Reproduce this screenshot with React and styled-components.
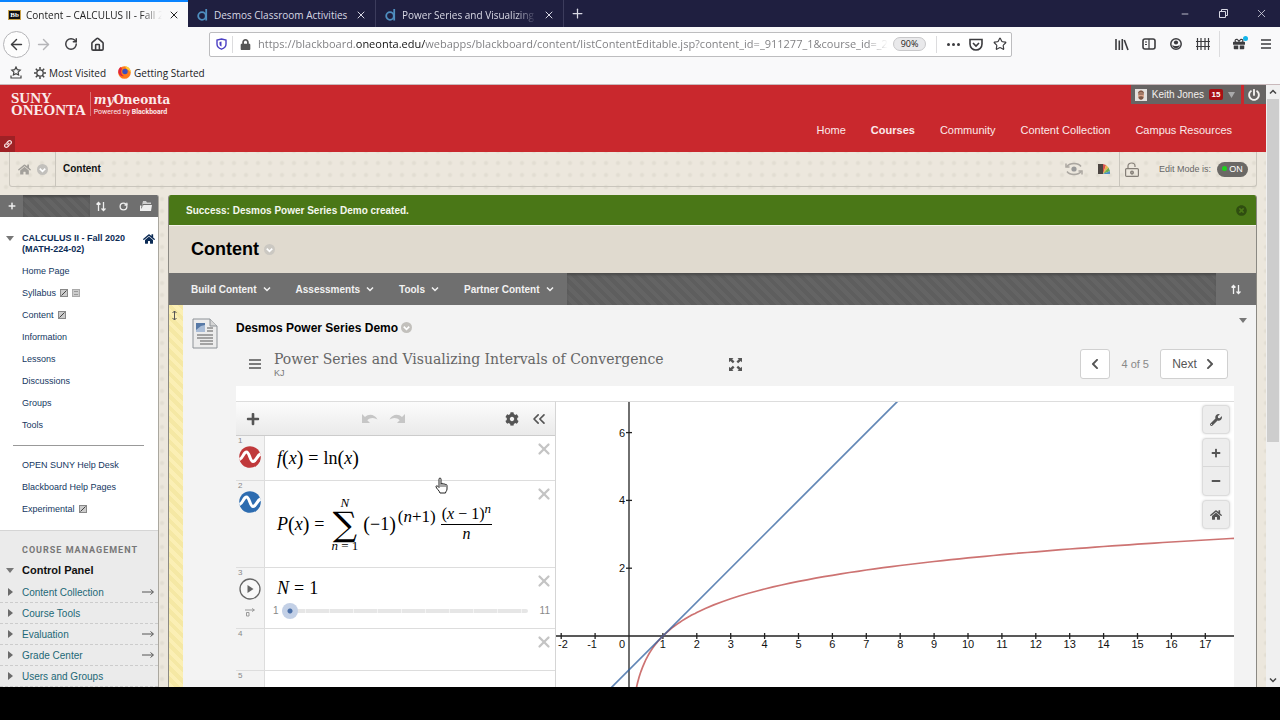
import React, { useState } from "react";
import styled, { createGlobalStyle, css } from "styled-components";
import {
  FaPlus,
  FaMinus,
  FaWrench,
  FaHome,
  FaCog,
  FaLock,
  FaChevronLeft,
  FaChevronRight,
  FaPowerOff,
  FaLink,
  FaGift,
  FaTimesCircle,
} from "react-icons/fa";
import { Home, RotateCw, ArrowLeft, ArrowRight, X, Minus, Plus, Star, ChevronsLeft } from "lucide-react";

const GlobalStyle = createGlobalStyle`
  * {
    box-sizing: border-box;
  }
  body {
    margin: 0;
    background: #000;
    font-family: "Liberation Sans", Arial, sans-serif;
    font-size: 10px;
    color: #111;
  }
  button {
    margin: 0;
    padding: 0;
    border: 0;
    background: none;
    color: inherit;
    font: inherit;
    cursor: pointer;
  }
  ul {
    margin: 0;
    padding: 0;
    list-style: none;
  }
  a {
    color: inherit;
    text-decoration: none;
  }
  svg {
    display: block;
    flex: none;
  }
`;

/* ---------- browser window ---------- */

const Screen = styled.div`
  display: flex;
  flex-direction: column;
  height: 100vh;
  padding-bottom: 33px;
  overflow: hidden;
  background: #000;
`;

const TabStrip = styled.div`
  display: flex;
  align-items: stretch;
  flex: none;
  height: 27px;
  background: #1f1f40;
  color: #d8d8e4;
  font-family: "Open Sans", "Noto Sans", sans-serif;
`;

const Tab = styled.div`
  display: flex;
  align-items: center;
  flex: 0 1 188px;
  gap: 5px;
  min-width: 0;
  padding: 2px 8px 0;
  border-right: 1px solid #3c3c5c;
  ${({ $active }) =>
    $active &&
    css`
      padding-top: 0;
      border-top: 2px solid #0a84ff;
      border-right: 0;
      background: #f9f9fa;
      color: #222;
    `}
`;

const TabTitle = styled.button`
  flex: 1;
  min-width: 0;
  overflow: hidden;
  font-size: 10px;
  line-height: 16px;
  text-align: left;
  white-space: nowrap;
  ${({ $fade }) => $fade && "mask-image: linear-gradient(90deg, #000 84%, transparent);"}
`;

const BbIcon = styled.span`
  flex: none;
  width: 13px;
  border: 1px solid #c9a24a;
  background: #111;
  color: #fff;
  font: bold 7px/8px "Liberation Serif", serif;
  text-align: center;
`;

const IconButton = styled.button`
  display: flex;
  align-items: center;
  justify-content: center;
  flex: none;
  width: ${({ $w }) => $w || 27}px;
`;

const WindowButtons = styled.div`
  display: flex;
  margin-left: auto;
`;

const NavBar = styled.div`
  display: flex;
  align-items: center;
  flex: none;
  height: 34px;
  background: #f9f9fa;
  color: #3c3c3f;
`;

const BackButton = styled(IconButton)`
  width: 27px;
  height: 27px;
  margin: 0 0 0 3px;
  border: 1px solid #b5b5b8;
  border-radius: 50%;
  background: #fdfdfd;
`;

const UrlBox = styled.div`
  display: flex;
  align-items: center;
  flex: 1;
  min-width: 0;
  height: 25px;
  margin: 0 96px 0 98px;
  padding-right: 3px;
  border: 1px solid #bdbdbf;
  border-radius: 2px;
  background: #fff;
`;

const UrlInput = styled.input`
  flex: 1;
  min-width: 0;
  margin: 0 5px 0 1px;
  padding: 0;
  border: 0;
  outline: 0;
  background: linear-gradient(
    90deg,
    #7b7b7e 0 97px,
    #111 97px 167px,
    #7b7b7e 167px calc(100% - 20px),
    transparent
  );
  background-clip: text;
  color: transparent;
  font-family: "Open Sans", "Noto Sans", sans-serif;
  font-size: 11px;
  line-height: 18px;
`;

const Zoom = styled.button`
  width: 33px;
  height: 14px;
  border: 1px solid #c8c8ca;
  border-radius: 7px;
  background: #e9e9eb;
  color: #222;
  font: 9px/12px "Open Sans", "Noto Sans", sans-serif;
`;

const Divider = styled.span`
  flex: none;
  width: 1px;
  height: ${({ $h }) => $h || 17}px;
  margin: 0 ${({ $m }) => $m || 0}px;
  background: #dcdcde;
`;

const NavTools = styled.div`
  display: flex;
  align-items: center;
  padding-right: 2px;
`;

const Bookmarks = styled.div`
  display: flex;
  align-items: center;
  flex: none;
  gap: 12px;
  height: 24px;
  padding: 0 10px;
  border-bottom: 1px solid #c9b9bb;
  background: #f9f9fa;
  color: #222;
  font-family: "Open Sans", "Noto Sans", sans-serif;
  font-size: 10px;
`;

const Bookmark = styled.a`
  display: flex;
  align-items: center;
  gap: 3px;
`;

const Viewport = styled.div`
  display: flex;
  flex: 1;
  min-height: 0;
`;

const Page = styled.div`
  display: flex;
  flex-direction: column;
  flex: 1;
  min-width: 0;
  overflow: hidden;
  background-color: #ece7dd;
  background-image: radial-gradient(circle, #e2ddd2 1px, transparent 3px);
  background-size: 12px 12px;
`;

const ScrollBar = styled.div`
  display: flex;
  flex-direction: column;
  align-items: center;
  flex: none;
  width: 14px;
  background: #f0f0f0;
  color: #444;
`;

const ScrollThumb = styled.div`
  flex: 0 0 57%;
  width: 12px;
  background: #cdcdcd;
`;

const ScrollArrow = styled(IconButton)`
  width: 14px;
  height: 14px;
  &:last-child {
    margin-top: auto;
  }
`;

/* ---------- blackboard header ---------- */

const Header = styled.header`
  display: flex;
  justify-content: space-between;
  flex: none;
  height: 67px;
  background: #c9282d;
  color: #fbeaea;
`;

const Brand = styled.div`
  display: flex;
  flex-direction: column;
  justify-content: space-between;
  padding-top: 7px;
`;

const Logo = styled.div`
  display: flex;
  gap: 3px;
  padding-left: 11px;
`;

const LogoName = styled.div`
  padding-right: 4px;
  border-right: 1px solid #dd6f72;
  font: bold 15px/12px "Liberation Serif", serif;
`;

const LogoPortal = styled.div`
  font: bold 12px/16px "DejaVu Serif", serif;
  small {
    display: block;
    font: 7px/8px Roboto, sans-serif;
  }
`;

const LinkBadge = styled.button`
  display: flex;
  align-items: center;
  justify-content: center;
  width: 15px;
  height: 16px;
  background: #9f2125;
`;

const HeaderRight = styled.div`
  display: flex;
  flex-direction: column;
  align-items: flex-end;
`;

const UserStrip = styled.div`
  display: flex;
  gap: 3px;
  height: 19px;
`;

const UserButton = styled.button`
  display: flex;
  align-items: center;
  gap: 5px;
  padding: 0 6px 0 4px;
  background: #676463;
  color: #f3f0ee;
  font-size: 10px;
`;

const Badge = styled.span`
  width: 14px;
  border-radius: 2px;
  background: #a80f14;
  color: #fff;
  font: bold 8px/11px "Liberation Sans", sans-serif;
  text-align: center;
`;

const TopNav = styled.nav`
  display: flex;
  gap: 25px;
  padding: 19px 34px 0 0;
  font-size: 11px;
  line-height: 14px;
`;

const TopLink = styled.a`
  font-weight: ${({ $current }) => ($current ? "bold" : "normal")};
`;

const Crumbs = styled.div`
  display: flex;
  align-items: stretch;
  flex: none;
  height: 35px;
  margin: 0 9px 8px;
  border: 1px solid #c9c5bc;
  border-top: 0;
  border-radius: 0 0 3px 3px;
  color: #666;
`;

const CrumbCell = styled.div`
  display: flex;
  align-items: center;
  justify-content: center;
  gap: 6px;
  width: ${({ $w }) => $w}px;
  border-right: ${({ $line }) => ($line ? "1px solid #c9c5bc" : 0)};
`;

const CrumbTitle = styled.div`
  flex: 1;
  padding-left: 7px;
  color: #111;
  font-size: 10px;
  font-weight: bold;
  line-height: 34px;
`;

const EditMode = styled.div`
  display: flex;
  align-items: center;
  gap: 6px;
  padding: 0 8px 0 14px;
  font-size: 9px;
`;

const EditToggle = styled.button`
  display: flex;
  align-items: center;
  justify-content: center;
  gap: 2px;
  width: 31px;
  height: 15px;
  border-radius: 8px;
  background: #6b6966;
  color: #fff;
  font-size: 9px;
  i {
    width: 5px;
    height: 5px;
    margin-bottom: 2px;
    border-radius: 50%;
    background: #1ed11e;
  }
`;

/* ---------- course menu ---------- */

const Columns = styled.div`
  display: flex;
  flex: 1;
  gap: 9px;
  min-height: 0;
  padding-right: 9px;
`;

const Side = styled.aside`
  display: flex;
  flex-direction: column;
  flex: none;
  width: 159px;
  border-right: 1px solid #aaa79f;
  border-radius: 0 2px 0 0;
  background: #fff;
  overflow: hidden;
`;

const stripes = css`
  background: repeating-linear-gradient(45deg, #5e5e5e 0 4px, #646464 4px 8px);
  box-shadow: inset 0 3px 3px -1px #4a4a4a;
`;

const SideTools = styled.div`
  display: flex;
  flex: none;
  height: 22px;
  background: #6f6f6f;
  color: #eee;
`;

const StripeFill = styled.div`
  flex: 1;
  ${stripes}
`;

const CourseTitle = styled.div`
  display: flex;
  padding: 16px 3px 5px 0;
  color: #0d2c56;
  font-size: 9px;
  font-weight: bold;
  line-height: 11px;
  a {
    flex: 1;
  }
`;

const Caret = styled.span`
  flex: none;
  width: 0;
  height: 0;
  margin: ${({ $top }) => ($top ? "3px 8px 0 6px" : "0 8px 0 6px")};
  border: solid transparent;
  border-width: 5px 4px 0;
  border-top-color: #777;
`;

const MenuItem = styled.li`
  display: flex;
  align-items: center;
  gap: 4px;
  height: 22px;
  padding-left: 22px;
  color: #14375f;
  font-size: 9px;
`;

const MenuRule = styled.hr`
  width: 131px;
  margin: 9px 0 8px 13px;
  border: 0;
  border-top: 1px solid #999;
`;

const Control = styled.section`
  flex: 1;
  margin-top: 10px;
  border-top: 1px solid #d5d5d5;
  background: #ebebeb;
`;

const ControlLabel = styled.div`
  padding: 11px 0 0 22px;
  color: #777;
  font: bold 9px/16px Roboto, sans-serif;
  letter-spacing: 1px;
  white-space: nowrap;
`;

const ControlTitle = styled.div`
  display: flex;
  align-items: center;
  height: 24px;
  color: #111;
  font-size: 11px;
  font-weight: bold;
`;

const ControlItem = styled.li`
  display: flex;
  align-items: center;
  height: 21px;
  padding: 0 4px 0 8px;
  border-bottom: 1px dashed #ccc;
  color: #1c6876;
  font-size: 10px;
  &::before {
    width: 0;
    height: 0;
    margin-right: 9px;
    border: solid transparent;
    border-width: 4px 0 4px 5px;
    border-left-color: #6b6b6b;
    content: "";
  }
  svg {
    margin-left: auto;
  }
`;

/* ---------- content ---------- */

const Main = styled.main`
  display: flex;
  flex-direction: column;
  flex: 1;
  min-width: 0;
  border-radius: 3px 3px 0 0;
  border-right: 1px solid #8b8983;
  border-left: 1px solid #8b8983;
  overflow: hidden;
`;

const Receipt = styled.div`
  display: flex;
  align-items: center;
  justify-content: space-between;
  flex: none;
  height: 30px;
  padding: 0 9px 0 17px;
  background: #4a7717;
  color: #f4f7ee;
  font-weight: bold;
  font-size: 10px;
  svg {
    color: #2f4d10;
  }
`;

const PageTitle = styled.div`
  display: flex;
  align-items: center;
  flex: none;
  gap: 5px;
  height: 48px;
  padding-left: 22px;
  border-top: 1px solid #f5f2ea;
  background: #e0dacf;
  h1 {
    margin: 0;
    color: #000;
    font-size: 18px;
  }
`;

const ActionBar = styled.div`
  display: flex;
  flex: none;
  height: 32px;
  background: #6f6f6f;
  color: #f2f2f2;
`;

const Actions = styled.ul`
  display: flex;
  padding-left: 10px;
`;

const Action = styled.button`
  display: flex;
  align-items: center;
  gap: 6px;
  height: 32px;
  padding: 0 13px 0 12px;
  font-size: 10px;
  font-weight: bold;
`;

const Item = styled.article`
  display: flex;
  flex: 1;
  min-height: 0;
  background: #f3f3f3;
`;

const DragStrip = styled.div`
  display: flex;
  justify-content: center;
  flex: none;
  width: 14px;
  padding: 5px 4px 0 0;
  background: repeating-linear-gradient(45deg, #fbefb4 0 4px, #f5e8a4 4px 8px);
`;

const ItemIcon = styled.div`
  flex: none;
  width: 53px;
  padding: 13px 0 0 9px;
`;

const ItemBody = styled.div`
  display: flex;
  flex-direction: column;
  flex: 1;
  min-width: 0;
  padding-right: 22px;
`;

const ItemTitle = styled.div`
  display: flex;
  align-items: center;
  flex: none;
  gap: 3px;
  height: 37px;
  margin-right: -13px;
  padding-top: 8px;
  h3 {
    margin: 0;
    color: #000;
    font-size: 12px;
  }
`;

const ItemToggle = styled(Caret)`
  margin: 0 0 14px auto;
`;

const ActivityHeader = styled.div`
  display: grid;
  grid-template-columns: 1fr auto 1fr;
  align-items: center;
  flex: none;
  height: 44px;
  color: #555;
`;

const ActivityName = styled.div`
  display: flex;
  align-items: center;
  gap: 13px;
  padding-left: 13px;
  white-space: nowrap;
  h2 {
    margin: 0;
    color: #666;
    font: 14px/18px "DejaVu Serif", serif;
  }
  p {
    margin: 0;
    color: #777;
    font-size: 9px;
    line-height: 10px;
  }
`;

const Pager = styled.div`
  display: flex;
  align-items: center;
  justify-content: flex-end;
  gap: 11px;
  padding-right: 6px;
  color: #888;
  font-size: 11px;
`;

const PagerButton = styled.button`
  display: flex;
  align-items: center;
  justify-content: center;
  gap: 7px;
  width: ${({ $w }) => $w}px;
  height: 30px;
  border: 1px solid #d0d0d0;
  border-radius: 3px;
  background: #fff;
  color: #555;
  font-size: 12px;
`;

const Calculator = styled.div`
  display: flex;
  flex: 1;
  min-height: 0;
  border-top: 15px solid #fff;
`;

const Expressions = styled.div`
  position: relative;
  display: flex;
  flex-direction: column;
  flex: none;
  width: 320px;
  border-top: 1px solid #ddd;
  border-right: 1px solid #d5d5d5;
  background: #fff;
`;

const ExprTools = styled.div`
  display: flex;
  align-items: center;
  flex: none;
  height: 34px;
  padding-right: 3px;
  border-bottom: 1px solid #ccc;
  background: linear-gradient(#fcfcfc, #eaeaea);
  color: #555;
  button:nth-child(2) {
    margin-left: auto;
  }
  button:nth-child(4) {
    margin-left: 88px;
  }
`;

const Row = styled.div`
  display: flex;
  flex: none;
  height: ${({ $h }) => $h}px;
  border-bottom: 1px solid #ddd;
`;

const Gutter = styled.div`
  display: flex;
  flex-direction: column;
  align-items: center;
  flex: none;
  width: 29px;
  border-right: 1px solid #ddd;
  background: #f3f3f3;
  color: #888;
  span {
    align-self: flex-start;
    padding-left: 2px;
    font-size: 8px;
    line-height: 10px;
  }
  svg + svg {
    margin-top: 8px;
  }
`;

const RowBody = styled.div`
  display: flex;
  flex-direction: column;
  justify-content: center;
  flex: 1;
  min-width: 0;
  padding-left: 12px;
`;

const Delete = styled(IconButton)`
  align-self: flex-start;
  width: 23px;
  height: 26px;
  color: #c4c4c4;
`;

const Formula = styled.div`
  display: flex;
  align-items: center;
  color: #000;
  font: 18px/20px "Liberation Serif", serif;
  white-space: pre;
`;

const Paren = styled.span`
  font-size: 20px;
`;

const Relation = styled.span`
  margin: 0 5px;
`;

const Sum = styled.span`
  display: flex;
  flex-direction: column;
  align-items: center;
  margin: 0 5px 0 2px;
  font-size: 13px;
  line-height: 14px;
  b {
    font: 34px/29px "DejaVu Serif", serif;
  }
`;

const Power = styled.span`
  margin: 0 0 14px 2px;
  font-size: 17px;
`;

const Fraction = styled.span`
  display: flex;
  flex-direction: column;
  align-items: center;
  margin-left: 5px;
  font-size: 16px;
  line-height: 18px;
  span:first-child {
    padding: 0 1px;
    border-bottom: 1px solid #000;
  }
  sup {
    font-size: 13px;
    line-height: 8px;
  }
`;

const SliderRow = styled.label`
  display: flex;
  align-items: center;
  gap: 2px;
  margin: 5px -18px 0 -4px;
  color: #888;
  font-size: 10px;
  line-height: 16px;
`;

const Slider = styled.input`
  flex: 1;
  min-width: 0;
  height: 16px;
  margin: 0 10px 0 1px;
  appearance: none;
  background: none;
  &::-webkit-slider-runnable-track {
    height: 4px;
    border-radius: 2px;
    background: repeating-linear-gradient(90deg, #e6e6e6 0 23px, #f4f4f4 23px 24px);
  }
  &::-webkit-slider-thumb {
    width: 16px;
    height: 16px;
    margin-top: -6px;
    appearance: none;
    border-radius: 50%;
    background: radial-gradient(circle, #4a6fa8 0 2px, #c3d0e6 3px);
  }
`;

const Graph = styled.div`
  position: relative;
  display: flex;
  justify-content: flex-end;
  flex: 1;
  min-width: 0;
  border-top: 1px solid #ddd;
  background: #fff;
`;

const Plot = styled.svg`
  position: absolute;
  inset: 0;
  width: 100%;
  height: 100%;
  font: 11px "Liberation Sans", sans-serif;
`;

const GraphTools = styled.div`
  display: flex;
  flex-direction: column;
  gap: 4px;
  padding: 3px 4px 0 0;
  z-index: 1;
`;

const ToolGroup = styled.div`
  border: 1px solid #dcdcdc;
  border-radius: 4px;
  background: #ededed;
  box-shadow: 0 0 3px #ddd;
  color: #555;
  button {
    width: 26px;
    height: 27px;
  }
  button + button {
    height: 29px;
    border-top: 1px solid #d8d8d8;
  }
`;

const Pointer = styled.svg`
  position: absolute;
  top: 75px;
  left: 199px;
`;

/* ---------- small drawings ---------- */

const Down = ({ size = 8, width = 2 }) => (
  <svg width={size} height={size} viewBox="0 0 8 8" fill="none" stroke="currentColor" strokeWidth={width}>
    <path d="M1 2.5 4 5.5 7 2.5" />
  </svg>
);

const ChevronBadge = ({ color = "#c2c0bc" }) => (
  <svg width="11" height="11" viewBox="0 0 12 12">
    <circle cx="6" cy="6" r="6" fill={color} />
    <path d="M3 5 6 8 9 5" fill="none" stroke="#fff" strokeWidth="1.8" />
  </svg>
);

const DesmosLogo = () => (
  <svg width="13" height="13" viewBox="0 0 13 13" fill="none" stroke="#4f8fc0" strokeWidth="1.800">
    <circle cx="6" cy="8" r="3.800" />
    <path d="M10.200 1v11.500" />
  </svg>
);

const Sort = () => (
  <svg width="10" height="11" viewBox="0 0 10 11" fill="none" stroke="currentColor" strokeWidth="1.3">
    <path d="M2.5 10V1.5M.5 3.5l2-2 2 2M7.500 1v8.500M5.500 7.500l2 2 2-2" />
  </svg>
);

const EditTag = ({ plain }) => (
  <svg width="8" height="8" viewBox="0 0 8 8">
    <rect x=".5" y=".5" width="7" height="7" fill="#ccc" stroke={plain ? "#aaa" : "#888"} />
    <path d={plain ? "M2 2.500h4M2 5.500h4" : "M1.500 6.500l5-5"} stroke={plain ? "#999" : "#444"} fill="none" />
  </svg>
);

const LongArrow = () => (
  <svg width="12" height="8" viewBox="0 0 12 8" fill="none" stroke="#555">
    <path d="M0 4h11M8.500 1.500l3 2.500-3 2.500" />
  </svg>
);

const Document = () => (
  <svg width="26" height="31" viewBox="0 0 26 31">
    <path d="M1 1h17l7 7v22H1z" fill="#ececec" stroke="#8d9297" />
    <path d="M18 1v7h7" fill="#d5d5d5" stroke="#8d9297" />
    <rect x="4" y="5" width="9" height="9" fill="#5779a6" />
    <path d="M4 14v-2l5-4 4-1v7z" fill="#a9bcd6" />
    <path d="M15 10h6M15 13h6M5 17h16M5 20h16M8 23h13M8 26h13" stroke="#8a8a8a" strokeWidth="1.4" />
  </svg>
);

const Wave = ({ color }) => (
  <svg width="22" height="22" viewBox="0 0 22 22">
    <circle cx="11" cy="11" r="10.800" fill={color} />
    <path
      d="M.5 13.500C4 12.500 4.500 6 7.500 6S11 15.500 14 15.500 18 9.500 21.500 8"
      fill="none"
      stroke="#fff"
      strokeWidth="3"
    />
  </svg>
);

const PlayCircle = () => (
  <svg width="22" height="22" viewBox="0 0 22 22">
    <circle cx="11" cy="11" r="10" fill="#f8f8f8" stroke="#666" strokeWidth="1.300" />
    <path d="M8.500 7v8l6-4z" fill="#666" />
  </svg>
);

const LoopMode = () => (
  <svg width="12" height="9" viewBox="0 0 12 9" fill="none" stroke="#999">
    <path d="M1 2h9M8 .5 10.500 2 8 3.500M4 4.500h-1.500v3.500h2.500v-3.500z" />
  </svg>
);

const Undo = ({ flip }) => (
  <svg width="16" height="11" viewBox="0 0 16 11" transform={flip ? "scale(-1 1)" : undefined}>
    <path d="M0 1v9h8L5.300 7.300C8 4.500 12 4.300 15.500 6.500 12.500 1.200 7 .5 3 4z" fill="#c6c6c6" />
  </svg>
);

const Expand = () => (
  <svg width="13" height="13" viewBox="0 0 13 13" fill="#555">
    <path d="M0 0h4.500L3.200 1.300 5.500 3.600 3.900 5.200 1.400 2.900 0 4.300zM13 0v4.300L11.600 2.900 9.100 5.200 7.500 3.600 9.800 1.300 8.500 0zM0 13V8.700l1.400 1.400 2.500-2.300 1.600 1.600-2.300 2.300L4.500 13zM13 13H8.500l1.300-1.300-2.300-2.300 1.600-1.600 2.500 2.300L13 8.700z" />
  </svg>
);

const Bars = ({ width = 12, thick = 2 }) => (
  <svg width={width} height="12" viewBox="0 0 12 12" stroke="currentColor" strokeWidth={thick} preserveAspectRatio="none">
    <path d="M0 2h12M0 6h12M0 10h12" />
  </svg>
);

const Shield = () => (
  <svg width="11" height="12" viewBox="0 0 11 12" fill="none" stroke="#4b3fc4" strokeWidth="1.400">
    <path d="M5.500 1 10 2v4c0 2.500-2 4.300-4.500 5.200C3 10.300 1 8.500 1 6V2z" />
    <path d="M5.500 3.500v5C4 8 3.500 7 3.500 6V4z" fill="#4b3fc4" stroke="none" />
  </svg>
);

const Dots = () => (
  <svg width="13" height="3" viewBox="0 0 13 3" fill="currentColor">
    <circle cx="1.500" cy="1.500" r="1.500" />
    <circle cx="6.500" cy="1.500" r="1.500" />
    <circle cx="11.500" cy="1.500" r="1.500" />
  </svg>
);

const Pocket = () => (
  <svg width="14" height="13" viewBox="0 0 14 13" fill="none" stroke="currentColor" strokeWidth="1.600">
    <path d="M1 1.500h12v4.500c0 3.500-2.700 6-6 6S1 9.500 1 6z" />
    <path d="M4 5l3 3 3-3" />
  </svg>
);

const Library = () => (
  <svg width="14" height="13" viewBox="0 0 14 13" fill="none" stroke="currentColor" strokeWidth="1.600">
    <path d="M1 1v11M4.300 2.500v9.500M7.300 1v11M9.300 2l3.700 10" />
  </svg>
);

const SidebarIcon = () => (
  <svg width="14" height="12" viewBox="0 0 14 12" fill="none" stroke="currentColor" strokeWidth="1.600">
    <rect x="1" y="1" width="12" height="10" rx="2" />
    <path d="M7 1v10M3 4h2M3 6.500h2" strokeWidth="1.200" />
  </svg>
);

const Account = () => (
  <svg width="12" height="12" viewBox="0 0 12 12">
    <circle cx="6" cy="6" r="5.200" fill="none" stroke="currentColor" strokeWidth="1.500" />
    <circle cx="6" cy="4.500" r="2.100" fill="currentColor" />
    <path d="M2.300 6.500c1 2 6.400 2 7.400 0 0 5-7.400 5-7.400 0z" fill="currentColor" />
  </svg>
);

const Fence = () => (
  <svg width="14" height="12" viewBox="0 0 14 12" stroke="currentColor" strokeWidth="1.200">
    <path d="M1.500 0v12M5 0v12M9 0v12M12.500 0v12M0 3.500h14M0 8.500h14" />
  </svg>
);

const Gift = styled.span`
  position: relative;
  &::after {
    position: absolute;
    top: -2px;
    right: -3px;
    width: 5px;
    height: 5px;
    border-radius: 50%;
    background: #12b5ea;
    content: "";
  }
`;

const Restore = () => (
  <svg width="9" height="9" viewBox="0 0 9 9" fill="none" stroke="currentColor">
    <path d="M.5 2.500h6v6h-6zM2.500 2.500v-2h6v6h-2" />
  </svg>
);

const BookmarkStar = () => (
  <svg width="12" height="13" viewBox="0 0 12 13" fill="none" stroke="#444" strokeWidth="1.200">
    <path d="M6 1l1.300 2.700 2.900.4-2.100 2 .5 2.900L6 7.600 3.400 9l.5-2.900-2.100-2 2.900-.4zM1 9.500v2.500h10V9.500" />
  </svg>
);

const Gear = () => (
  <svg width="12" height="12" viewBox="0 0 12 12" fill="none" stroke="#444">
    <circle cx="6" cy="6" r="3.200" strokeWidth="1.300" />
    <path
      d="M6 0v2.500M6 9.500V12M0 6h2.500M9.500 6H12M1.800 1.800l1.700 1.700M8.500 8.500l1.700 1.700M10.200 1.800 8.500 3.500M3.500 8.500l-1.700 1.700"
      strokeWidth="1.500"
    />
  </svg>
);

const Firefox = () => (
  <svg width="13" height="13" viewBox="0 0 13 13">
    <circle cx="6.500" cy="6.500" r="6.300" fill="#ff7a1a" />
    <path d="M7 .2c4 .3 6 3.300 5.700 6.800C11.500 3.500 8.500 4 7 .2z" fill="#ffcf33" />
    <path d="M.3 5C.5 3 1.500 1.500 3 1l1 2C2.500 5 3 9 6 10c-3 1-6-1.500-5.700-5z" fill="#e0263d" />
    <circle cx="7" cy="5.500" r="2.700" fill="#3b4fc0" />
  </svg>
);

const Face = () => (
  <svg width="12" height="12" viewBox="0 0 12 12">
    <rect width="12" height="12" fill="#e3e0dd" />
    <ellipse cx="6" cy="6" rx="3" ry="4.500" fill="#d9a288" />
    <path d="M3 4.500c0-4 6-4 6 0-1-1.500-5-1.500-6 0zM3.500 8c1-1 4-1 5 0 0 3.500-5 3.500-5 0z" fill="#7b5646" />
    <path d="M3.500 5h5" stroke="#4a3a34" strokeWidth=".8" />
  </svg>
);

const Preview = () => (
  <svg width="18" height="14" viewBox="0 0 18 14" fill="none" stroke="#aaa6a0" strokeWidth="1.500">
    <path d="M2 4.500C5 .5 13 .5 16 4.500M2 9.500c3 4 11 4 14 0" />
    <path d="M1 1.500v3.500h3.500M17 12.500V9h-3.500" />
    <circle cx="9" cy="7" r="2.600" fill="#999" stroke="none" />
  </svg>
);

const Swatches = () => (
  <svg width="12" height="12" viewBox="0 0 12 12">
    <path d="M0 1h5v10H0z" fill="#4c4541" />
    <path d="M5 11V1l3 1z" fill="#d9534f" />
    <path d="M5 11l3-9 2.500 2.500z" fill="#e8b54d" />
    <path d="M5 11l5.500-6.500L12 8z" fill="#6cb04f" />
    <path d="M5 11l7-3v3z" fill="#4a90c4" />
  </svg>
);

const OpenLock = () => (
  <svg width="14" height="15" viewBox="0 0 14 15" fill="none" stroke="#857f78" strokeWidth="1.200">
    <rect x=".6" y="6.600" width="12.800" height="7.800" rx="1" />
    <path d="M3 6.500V4c0-4 7-4 7 0v1M7 9.500v3" />
    <circle cx="7" cy="10.500" r="1.400" />
  </svg>
);

const MoveHandle = () => (
  <svg width="7" height="11" viewBox="0 0 7 11" fill="none" stroke="#555">
    <path d="M3.500 1v9M1.500 3l2-2 2 2M1.500 8l2 2 2-2" />
  </svg>
);

const Folders = () => (
  <svg width="12" height="10" viewBox="0 0 12 10" fill="currentColor">
    <path d="M3 0h3l1 1.500h4V3H2.500v3H1.500z" opacity=".75" />
    <path d="M3.500 4H12l-1 6H0V4.500h1.200v3.500z" />
  </svg>
);

const HandPointer = () => (
  <Pointer width="13" height="17" viewBox="0 0 13 17">
    <path
      d="M4 10V2.200c0-1.600 2-1.600 2 0V7c.3-1 2-1 2 .3.300-1 2-.8 2 .5.500-.8 2-.5 2 .8V12c0 2-1.500 2.500-1.500 4H5c-.5-2.500-4-4.500-4-6.500 0-1 1.500-1 3 1z"
      fill="#fff"
      stroke="#222"
    />
    <path d="M6 7v3M8 7.500V10M10 8v2" stroke="#222" strokeWidth=".8" />
  </Pointer>
);

/* ---------- graph ---------- */

const unit = 33.9;
const origin = { x: 73, y: 234 };
const px = (x) => origin.x + x * unit;
const py = (y) => origin.y - y * unit;

const lnPath = () => {
  const points = [];
  for (let x = 0.15; x < 60; x += x < 2 ? 0.05 : 0.25) {
    points.push(`${px(x).toFixed(1)} ${py(Math.log(x)).toFixed(1)}`);
  }
  return `M${points.join("L")}`;
};

const xTicks = Array.from({ length: 20 }, (_, i) => i - 2).filter((n) => n !== 0);
const yTicks = [2, 4, 6];

const GraphPaper = () => (
  <Plot role="img" aria-label="Graph of ln(x) and its power series">
    <g stroke="#222" strokeWidth="1.3">
      <line x1="0" x2="100%" y1={py(0)} y2={py(0)} />
      <line x1={px(0)} x2={px(0)} y1="0" y2="100%" />
      {xTicks.map((n) => (
        <line key={n} x1={px(n)} x2={px(n)} y1={py(0) - 3} y2={py(0) + 3} />
      ))}
      {yTicks.map((n) => (
        <line key={n} x1={px(0) - 3} x2={px(0) + 3} y1={py(n)} y2={py(n)} />
      ))}
    </g>
    <path d={lnPath()} fill="none" stroke="#c0504f" strokeOpacity=".8" strokeWidth="1.7" />
    <line x1={px(-2)} y1={py(-3)} x2={px(12)} y2={py(11)} stroke="#2d5f9e" strokeOpacity=".75" strokeWidth="1.7" />
    <g fill="#111" textAnchor="middle">
      {xTicks.map((n) => (
        <text key={n} x={n < 0 ? Math.max(px(n) - 3, 7) : px(n)} y={py(0) + 12}>
          {n}
        </text>
      ))}
      <text x={px(0) - 7} y={py(0) + 12}>
        0
      </text>
      {yTicks.map((n) => (
        <text key={n} x={px(0) - 7} y={py(n) + 4}>
          {n}
        </text>
      ))}
    </g>
  </Plot>
);

/* ---------- data ---------- */

const topLinks = ["Home", "Courses", "Community", "Content Collection", "Campus Resources"];

const courseLinks = [
  { text: "Home Page" },
  { text: "Syllabus", hidden: true, empty: true },
  { text: "Content", hidden: true },
  { text: "Information" },
  { text: "Lessons" },
  { text: "Discussions" },
  { text: "Groups" },
  { text: "Tools" },
];

const helpLinks = [
  { text: "OPEN SUNY Help Desk" },
  { text: "Blackboard Help Pages" },
  { text: "Experimental", hidden: true },
];

const controlLinks = [
  { text: "Content Collection", arrow: true },
  { text: "Course Tools" },
  { text: "Evaluation", arrow: true },
  { text: "Grade Center", arrow: true },
  { text: "Users and Groups" },
];

const actions = ["Build Content", "Assessments", "Tools", "Partner Content"];

const MenuList = ({ links }) => (
  <ul>
    {links.map(({ text, hidden, empty }) => (
      <MenuItem key={text}>
        <a href="#">{text}</a>
        {hidden && <EditTag />}
        {empty && <EditTag plain />}
      </MenuItem>
    ))}
  </ul>
);

const Fn = ({ name }) => (
  <>
    {name}
    <Paren>(</Paren>
    <i>x</i>
    <Paren>)</Paren>
  </>
);

const CloseTab = () => (
  <IconButton $w={13} aria-label="Close tab"><X size={12} /></IconButton>
);

function Browser() {
  return (
    <>
      <TabStrip>
        <Tab $active>
          <BbIcon>Bb</BbIcon>
          <TabTitle $fade>Content – CALCULUS II - Fall 2020</TabTitle>
          <CloseTab />
        </Tab>
        <Tab>
          <DesmosLogo />
          <TabTitle>Desmos Classroom Activities</TabTitle>
          <CloseTab />
        </Tab>
        <Tab>
          <DesmosLogo />
          <TabTitle $fade>Power Series and Visualizing Intervals</TabTitle>
          <CloseTab />
        </Tab>
        <IconButton aria-label="New tab"><Plus size={15} /></IconButton>
        <WindowButtons>
          <IconButton $w={38} aria-label="Minimize"><Minus size={10} /></IconButton>
          <IconButton $w={38} aria-label="Restore"><Restore /></IconButton>
          <IconButton $w={38} aria-label="Close"><X size={13} strokeWidth={1.5} /></IconButton>
        </WindowButtons>
      </TabStrip>
      <NavBar>
        <BackButton aria-label="Back"><ArrowLeft size={17} /></BackButton>
        <IconButton aria-label="Forward"><ArrowRight size={17} color="#b5b5b8" /></IconButton>
        <IconButton aria-label="Reload"><RotateCw size={14} strokeWidth={2.5} /></IconButton>
        <IconButton aria-label="Home"><Home size={15} strokeWidth={2.5} /></IconButton>
        <UrlBox>
          <IconButton $w={22} aria-label="Tracking protection"><Shield /></IconButton>
          <Divider />
          <IconButton $w={24} aria-label="Site security"><FaLock size={11} color="#555" /></IconButton>
          <UrlInput
            aria-label="Address"
            defaultValue="https://blackboard.oneonta.edu/webapps/blackboard/content/listContentEditable.jsp?content_id=_911277_1&course_id=_2"
          />
          <Zoom>90%</Zoom>
          <Divider $m={10} />
          <IconButton $w={13} aria-label="Page actions"><Dots /></IconButton>
          <IconButton $w={32} aria-label="Save to Pocket"><Pocket /></IconButton>
          <IconButton $w={16} aria-label="Bookmark"><Star size={14} /></IconButton>
        </UrlBox>
        <NavTools>
          <IconButton aria-label="Library"><Library /></IconButton>
          <IconButton aria-label="Sidebars"><SidebarIcon /></IconButton>
          <IconButton aria-label="Account"><Account /></IconButton>
          <IconButton aria-label="Containers"><Fence /></IconButton>
          <Divider $h={26} $m={3} />
          <IconButton $w={31} aria-label="What's new"><Gift><FaGift size={12} /></Gift></IconButton>
          <IconButton $w={24} aria-label="Menu"><Bars width={10} thick={1.6} /></IconButton>
        </NavTools>
      </NavBar>
      <Bookmarks>
        <BookmarkStar />
        <Bookmark href="#"><Gear />Most Visited</Bookmark>
        <Bookmark href="#"><Firefox />Getting Started</Bookmark>
      </Bookmarks>
    </>
  );
}

function SiteHeader() {
  return (
    <>
      <Header>
        <Brand>
          <Logo>
            <LogoName>SUNY<br />ONEONTA</LogoName>
            <LogoPortal>
              <i>my</i>Oneonta
              <small>Powered by <b>Blackboard</b></small>
            </LogoPortal>
          </Logo>
          <LinkBadge aria-label="Quick links"><FaLink size={8} /></LinkBadge>
        </Brand>
        <HeaderRight>
          <UserStrip>
            <UserButton>
              <Face />
              Keith Jones
              <Badge>15</Badge>
              <svg width="7" height="6" viewBox="0 0 7 6" fill="#aaa"><path d="M0 0h7L3.500 6z" /></svg>
            </UserButton>
            <UserButton aria-label="Log out"><FaPowerOff size={12} /></UserButton>
          </UserStrip>
          <TopNav>
            {topLinks.map((text) => (
              <TopLink key={text} href="#" $current={text === "Courses"}>{text}</TopLink>
            ))}
          </TopNav>
        </HeaderRight>
      </Header>
      <Crumbs>
        <CrumbCell $w={46} $line>
          <FaHome size={13} color="#a3a09b" />
          <ChevronBadge />
        </CrumbCell>
        <CrumbTitle>Content</CrumbTitle>
        <CrumbCell $w={32}><Preview /></CrumbCell>
        <CrumbCell $w={30} $line><Swatches /></CrumbCell>
        <CrumbCell $w={25}><OpenLock /></CrumbCell>
        <EditMode>
          Edit Mode is:
          <EditToggle aria-label="Edit mode on"><i />ON</EditToggle>
        </EditMode>
      </Crumbs>
    </>
  );
}

function CourseMenu() {
  return (
    <Side>
      <SideTools>
        <IconButton $w={23} aria-label="Add menu item"><FaPlus size={8} /></IconButton>
        <StripeFill />
        <IconButton $w={22} aria-label="Reorder"><Sort /></IconButton>
        <IconButton $w={22} aria-label="Refresh"><RotateCw size={9} strokeWidth={3.5} /></IconButton>
        <IconButton $w={24} aria-label="Folder view"><Folders /></IconButton>
      </SideTools>
      <CourseTitle>
        <Caret $top />
        <a href="#">CALCULUS II - Fall 2020<br />(MATH-224-02)</a>
        <FaHome size={12} />
      </CourseTitle>
      <MenuList links={courseLinks} />
      <MenuRule />
      <MenuList links={helpLinks} />
      <Control>
        <ControlLabel>COURSE MANAGEMENT</ControlLabel>
        <ControlTitle><Caret />Control Panel</ControlTitle>
        <ul>
          {controlLinks.map(({ text, arrow }) => (
            <ControlItem key={text}>
              <a href="#">{text}</a>
              {arrow && <LongArrow />}
            </ControlItem>
          ))}
        </ul>
      </Control>
    </Side>
  );
}

function ExpressionRow({ number, height, icon, children }) {
  return (
    <Row $h={height}>
      <Gutter>
        <span>{number}</span>
        {icon}
      </Gutter>
      <RowBody>{children}</RowBody>
      <Delete aria-label={`Delete expression ${number}`}><X size={18} strokeWidth={3} /></Delete>
    </Row>
  );
}

function Activity() {
  const [n, setN] = useState(1);
  return (
    <>
      <ActivityHeader>
        <ActivityName>
          <button aria-label="Activity menu"><Bars thick={1.5} /></button>
          <div>
            <h2>Power Series and Visualizing Intervals of Convergence</h2>
            <p>KJ</p>
          </div>
        </ActivityName>
        <button aria-label="Full screen"><Expand /></button>
        <Pager>
          <PagerButton $w={30} aria-label="Previous"><FaChevronLeft size={12} /></PagerButton>
          4 of 5
          <PagerButton $w={68}>Next <FaChevronRight size={12} /></PagerButton>
        </Pager>
      </ActivityHeader>
      <Calculator>
        <Expressions>
          <ExprTools>
            <IconButton $w={34} aria-label="Add item"><FaPlus size={14} /></IconButton>
            <IconButton aria-label="Undo"><Undo /></IconButton>
            <IconButton aria-label="Redo"><Undo flip /></IconButton>
            <IconButton aria-label="Settings"><FaCog size={14} /></IconButton>
            <IconButton aria-label="Hide list"><ChevronsLeft size={20} /></IconButton>
          </ExprTools>
          <ExpressionRow number={1} height={45} icon={<Wave color="#c0393b" />}>
            <Formula>
              <Fn name={<i>f</i>} />
              <Relation>=</Relation>
              <Fn name="ln" />
            </Formula>
          </ExpressionRow>
          <ExpressionRow number={2} height={87} icon={<Wave color="#2d6cb0" />}>
            <Formula>
              <Fn name={<i>P</i>} />
              <Relation>=</Relation>
              <Sum><i>N</i><b>∑</b><span><i>n</i> = 1</span></Sum>
              <Paren>(</Paren>−1<Paren>)</Paren>
              <Power>(<i>n</i>+1)</Power>
              <Fraction>
                <span>(<i>x</i> − 1)<sup><i>n</i></sup></span>
                <i>n</i>
              </Fraction>
            </Formula>
          </ExpressionRow>
          <ExpressionRow number={3} height={61} icon={<><PlayCircle /><LoopMode /></>}>
            <Formula><i>N</i><Relation>=</Relation>{n}</Formula>
            <SliderRow>
              1
              <Slider
                type="range"
                min="1"
                max="11"
                value={n}
                aria-label="N"
                onChange={(e) => setN(Number(e.target.value))}
              />
              11
            </SliderRow>
          </ExpressionRow>
          <ExpressionRow number={4} height={42} />
          <Row $h={42}><Gutter><span>5</span></Gutter></Row>
          <HandPointer />
        </Expressions>
        <Graph>
          <GraphPaper />
          <GraphTools>
            <ToolGroup><IconButton aria-label="Graph settings"><FaWrench size={12} /></IconButton></ToolGroup>
            <ToolGroup>
              <IconButton aria-label="Zoom in"><FaPlus size={10} /></IconButton>
              <IconButton aria-label="Zoom out"><FaMinus size={10} /></IconButton>
            </ToolGroup>
            <ToolGroup><IconButton aria-label="Default view"><FaHome size={12} /></IconButton></ToolGroup>
          </GraphTools>
        </Graph>
      </Calculator>
    </>
  );
}

function App() {
  return (
    <Screen>
      <GlobalStyle />
      <Browser />
      <Viewport>
        <Page>
          <SiteHeader />
          <Columns>
            <CourseMenu />
            <Main>
              <Receipt>
                Success: Desmos Power Series Demo created.
                <button aria-label="Dismiss"><FaTimesCircle size={11} /></button>
              </Receipt>
              <PageTitle>
                <h1>Content</h1>
                <ChevronBadge color="#cbc8c2" />
              </PageTitle>
              <ActionBar>
                <Actions>
                  {actions.map((text) => (
                    <li key={text}><Action>{text}<Down width={1.5} /></Action></li>
                  ))}
                </Actions>
                <StripeFill />
                <IconButton $w={40} aria-label="Reorder"><Sort /></IconButton>
              </ActionBar>
              <Item>
                <DragStrip><MoveHandle /></DragStrip>
                <ItemIcon><Document /></ItemIcon>
                <ItemBody>
                  <ItemTitle>
                    <h3>Desmos Power Series Demo</h3>
                    <ChevronBadge />
                    <ItemToggle />
                  </ItemTitle>
                  <Activity />
                </ItemBody>
              </Item>
            </Main>
          </Columns>
        </Page>
        <ScrollBar>
          <ScrollArrow aria-label="Scroll up">
            <svg width="8" height="8" viewBox="0 0 8 8" fill="none" stroke="currentColor" strokeWidth="1.5">
              <path d="M1 5.500 4 2.500 7 5.500" />
            </svg>
          </ScrollArrow>
          <ScrollThumb />
          <ScrollArrow aria-label="Scroll down"><Down width={1.5} /></ScrollArrow>
        </ScrollBar>
      </Viewport>
    </Screen>
  );
}

export default App;
